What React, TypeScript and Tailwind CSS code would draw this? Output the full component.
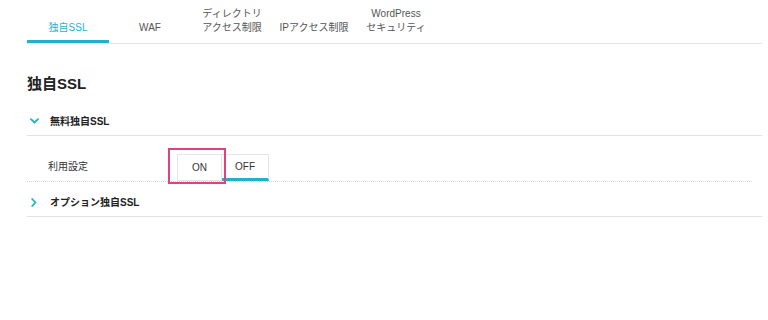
const tabs = [
  { lines: ["独自SSL"], active: true },
  { lines: ["WAF"] },
  { lines: ["ディレクトリ", "アクセス制限"] },
  { lines: ["IPアクセス制限"] },
  { lines: ["WordPress", "セキュリティ"] },
];

function ChevronDown() {
  return (
    <svg width="9" height="6" viewBox="0 0 9 6" fill="none">
      <path d="M1 1.2 L4.5 4.5 L8 1.2" stroke="#1fb3c9" strokeWidth="1.8" strokeLinecap="round" strokeLinejoin="round" />
    </svg>
  );
}

function ChevronRight() {
  return (
    <svg width="6" height="9" viewBox="0 0 6 9" fill="none">
      <path d="M1.2 1 L4.5 4.5 L1.2 8" stroke="#1fb3c9" strokeWidth="1.8" strokeLinecap="round" strokeLinejoin="round" />
    </svg>
  );
}

export default function App() {
  return (
    <div
      className="h-[320px] w-[768px] bg-white pl-[27px] pr-[6px] text-[#333]"
      style={{ fontFamily: '"Liberation Sans", "Noto Sans CJK JP", sans-serif' }}
    >
      <div className="flex h-[44px] border-b border-[#e3e3e3]">
        {tabs.map((t, i) => (
          <div
            key={i}
            className={`flex w-[82px] flex-col items-center justify-end text-[10px] leading-[14px] ${
              t.active ? "border-b-[3px] border-[#1fb3c9] pb-[5px] text-[#1fb3c9]" : "pb-[8px] text-[#555]"
            }`}
          >
            {t.lines.map((l) => (
              <span key={l}>{l}</span>
            ))}
          </div>
        ))}
      </div>

      <h2 className="mt-[30px] text-[15px] font-bold leading-[20px] text-[#222]">独自SSL</h2>

      <div className="mt-[13px] flex h-[29px] items-center border-b border-[#e3e3e3]">
        <div className="flex w-[23px] justify-start pl-[3px]">
          <ChevronDown />
        </div>
        <span className="text-[10px] font-bold text-[#222]">無料独自SSL</span>
      </div>

      <div className="mr-[10px] flex h-[46px] items-end border-b border-dotted border-[#d6d6d6] pl-[21px]">
        <span className="mb-[7px] w-[129px] text-[10px] leading-[14px] text-[#333]">利用設定</span>
        <div className="relative flex">
          <div className="absolute -left-[9px] -top-[6px] z-10 h-[36px] w-[58px] border-2 border-[#e4407e]" />
          <div className="flex h-[27px] w-[45px] items-center justify-center border border-[#e6e6e6] text-[10px] text-[#333]">
            ON
          </div>
          <div className="flex h-[27px] w-[47px] items-center justify-center border border-l-0 border-[#e6e6e6] border-b-[3px] border-b-[#1fb3c9] text-[10px] text-[#333]">
            OFF
          </div>
        </div>
      </div>

      <div className="flex h-[35px] items-center border-b border-[#e3e3e3] pt-[6px]">
        <div className="flex w-[23px] justify-start pl-[4px]">
          <ChevronRight />
        </div>
        <span className="text-[10px] font-bold text-[#222]">オプション独自SSL</span>
      </div>
    </div>
  );
}
